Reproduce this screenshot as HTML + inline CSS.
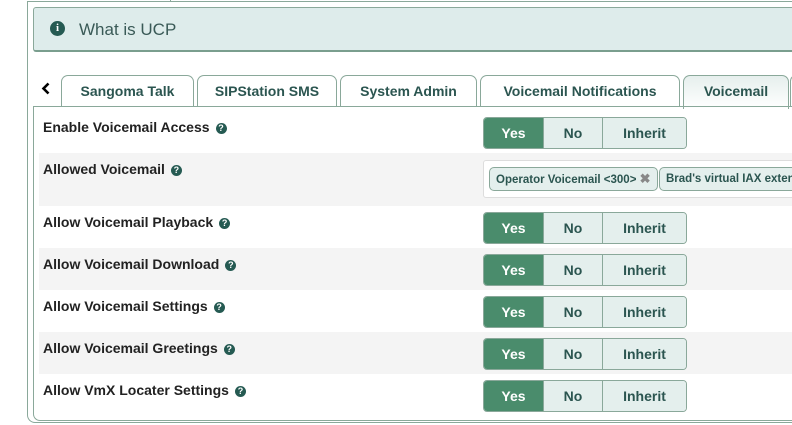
<!DOCTYPE html>
<html><head><meta charset="utf-8"><style>
body{margin:0;width:792px;height:425px;overflow:hidden;background:#fff;font-family:"Liberation Sans",sans-serif;position:relative}
.a{position:absolute}
.outer{left:27px;top:1px;width:800px;height:420px;border-left:1px solid #8aa89a;border-bottom:1px solid #8aa89a;border-top:1px solid #8aa89a;border-radius:0 0 0 8px}
.hdr{left:33px;top:7px;width:780px;height:42px;background:#deeceb;border:1px solid #8aa89a;border-bottom:2px solid #7a9e8e;border-radius:3px}
.hdr span{position:absolute;left:45px;top:12px;font-size:17px;color:#3a5a57}
.info{position:absolute;left:16px;top:13px;width:15px;height:15px;border-radius:50%;background:#255a52;color:#fff;font:bold 11px "Liberation Serif",serif;text-align:center;line-height:15px}
.tab{top:75px;height:31px;border:1px solid #8aa89a;border-bottom:none;border-radius:7px 7px 0 0;background:#fff;font-weight:bold;font-size:14px;color:#2b5550;text-align:center;line-height:31px}
.tab.act{background:linear-gradient(#e6efed,#fff);height:33px}
.panel{left:33px;top:106px;width:780px;height:313px;border-left:1px solid #8aa89a;border-top:1px solid #8aa89a;border-bottom:1px solid #8aa89a;border-radius:0 0 0 7px}
.row{left:39px;width:760px}
.g{background:#f4f4f4}
.lbl{position:absolute;left:4px;font-weight:bold;font-size:14px;color:#222;white-space:nowrap}
.q{display:inline-block;width:11px;height:11px;border-radius:50%;background:#255a52;color:#fff;font-size:9px;line-height:11px;text-align:center;margin-left:6px;vertical-align:1px}
.bg{position:absolute;left:444px;width:202px;height:30px;border:1px solid #8aa89a;border-radius:4px;overflow:hidden;display:flex;font-weight:bold;font-size:14px;color:#2b5550}
.bg div{text-align:center;line-height:30px;background:#e4efed}
.bg .y{width:59px;background:#4a8c6c;color:#fff}
.bg .n{width:58px;border-left:1px solid #8aa89a}
.bg .i{flex:1;border-left:1px solid #8aa89a}
.sel{position:absolute;left:444px;top:7px;width:330px;height:36px;border:1px solid #ddd;border-radius:3px;background:#fff}
.tg{position:absolute;top:6px;height:22px;border:1px solid #8aa89a;border-radius:5px;background:#e4efed;font-weight:bold;font-size:11.5px;color:#2b5550;line-height:22px;padding:0 6px;white-space:nowrap}
</style></head><body>
<div class="a outer"></div>
<div class="a" style="left:170px;top:0;width:1px;height:2px;background:#8aa89a"></div>
<div class="a hdr"><div class="info">i</div><span>What is UCP</span></div>
<svg class="a" style="left:41px;top:82px" width="10" height="13" viewBox="0 0 10 13"><path d="M7.5 1.5 L2.5 6.5 L7.5 11.5" stroke="#000" stroke-width="2.6" fill="none"/></svg>
<div class="a tab" style="left:61px;width:131px">Sangoma Talk</div>
<div class="a tab" style="left:197px;width:138px">SIPStation SMS</div>
<div class="a tab" style="left:340px;width:135px">System Admin</div>
<div class="a tab" style="left:480px;width:198px">Voicemail Notifications</div>
<div class="a tab act" style="left:683px;width:104px">Voicemail</div>
<div class="a tab" style="left:790px;width:10px"></div>
<div class="a panel"></div>

<div class="a row" style="top:108px;height:45px"><div class="lbl" style="top:11px">Enable Voicemail Access<span class="q">?</span></div><div class="bg" style="top:9px"><div class="y">Yes</div><div class="n">No</div><div class="i">Inherit</div></div></div>
<div class="a row g" style="top:153px;height:53px"><div class="lbl" style="top:8px">Allowed Voicemail<span class="q">?</span></div><div class="sel"><div class="tg" style="left:5px">Operator Voicemail &lt;300&gt; <span style="color:#888;font-size:13px">&#10006;</span></div><div class="tg" style="left:175px">Brad's virtual IAX extension</div></div></div>
<div class="a row" style="top:206px;height:42px"><div class="lbl" style="top:8px">Allow Voicemail Playback<span class="q">?</span></div><div class="bg" style="top:6px"><div class="y">Yes</div><div class="n">No</div><div class="i">Inherit</div></div></div>
<div class="a row g" style="top:248px;height:42px"><div class="lbl" style="top:8px">Allow Voicemail Download<span class="q">?</span></div><div class="bg" style="top:6px"><div class="y">Yes</div><div class="n">No</div><div class="i">Inherit</div></div></div>
<div class="a row" style="top:290px;height:42px"><div class="lbl" style="top:8px">Allow Voicemail Settings<span class="q">?</span></div><div class="bg" style="top:6px"><div class="y">Yes</div><div class="n">No</div><div class="i">Inherit</div></div></div>
<div class="a row g" style="top:332px;height:42px"><div class="lbl" style="top:8px">Allow Voicemail Greetings<span class="q">?</span></div><div class="bg" style="top:6px"><div class="y">Yes</div><div class="n">No</div><div class="i">Inherit</div></div></div>
<div class="a row" style="top:374px;height:42px"><div class="lbl" style="top:8px">Allow VmX Locater Settings<span class="q">?</span></div><div class="bg" style="top:6px"><div class="y">Yes</div><div class="n">No</div><div class="i">Inherit</div></div></div>
</body></html>
